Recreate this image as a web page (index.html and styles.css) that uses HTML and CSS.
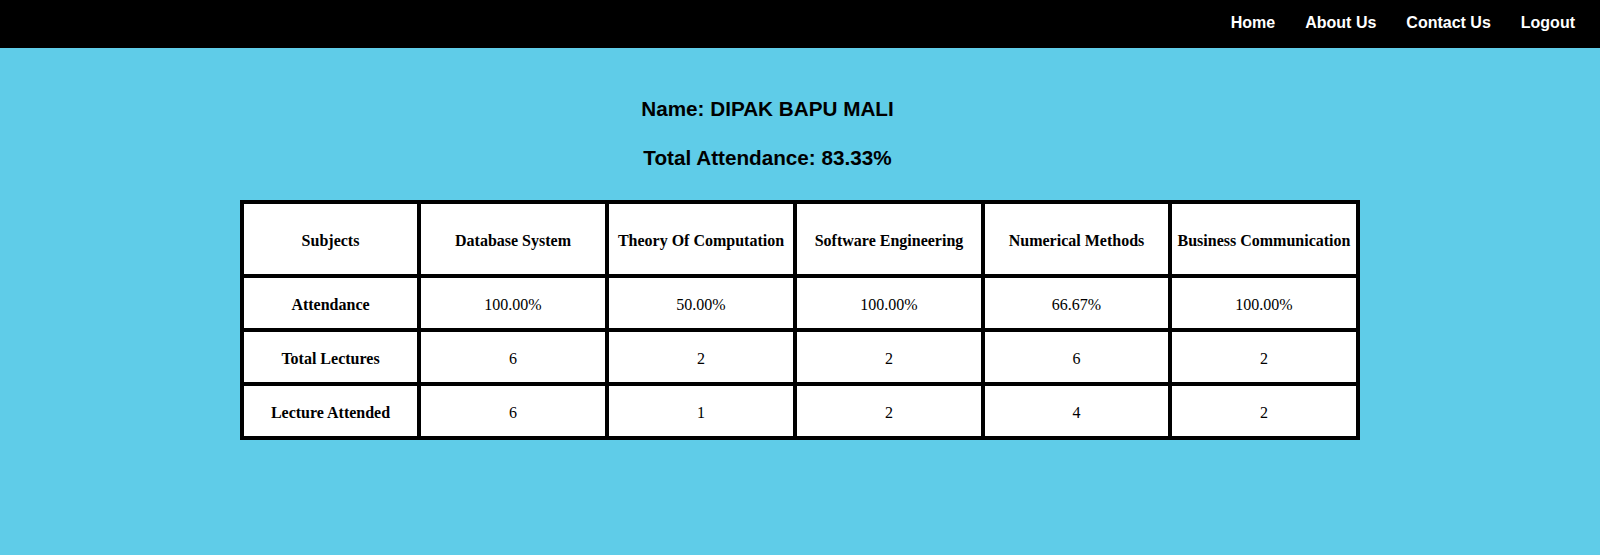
FILE: index.html
```html
<!DOCTYPE html>
<html lang="en">
<head>
<meta charset="utf-8">
<title>Attendance</title>
<link rel="stylesheet" href="styles.css">
</head>
<body>
<nav class="topnav">
  <a class="nav-link" href="#">Home</a>
  <a class="nav-link" href="#">About Us</a>
  <a class="nav-link" href="#">Contact Us</a>
  <a class="nav-link" href="#">Logout</a>
</nav>
<main class="content">
  <div class="info">
    <h2 class="info-line">Name: DIPAK BAPU MALI</h2>
    <h2 class="info-line">Total Attendance: 83.33%</h2>
  </div>
  <table class="att-table">
    <colgroup>
      <col class="c-first">
      <col class="c-wide">
      <col class="c-wide">
      <col class="c-wide">
      <col class="c-mid">
      <col class="c-wide">
    </colgroup>
    <tr class="row-head">
      <th>Subjects</th>
      <th>Database System</th>
      <th>Theory Of Computation</th>
      <th>Software Engineering</th>
      <th>Numerical Methods</th>
      <th>Business Communication</th>
    </tr>
    <tr class="row-body">
      <th>Attendance</th>
      <td>100.00%</td>
      <td>50.00%</td>
      <td>100.00%</td>
      <td>66.67%</td>
      <td>100.00%</td>
    </tr>
    <tr class="row-body">
      <th>Total Lectures</th>
      <td>6</td>
      <td>2</td>
      <td>2</td>
      <td>6</td>
      <td>2</td>
    </tr>
    <tr class="row-body">
      <th>Lecture Attended</th>
      <td>6</td>
      <td>1</td>
      <td>2</td>
      <td>4</td>
      <td>2</td>
    </tr>
  </table>
</main>
</body>
</html>
```

FILE: styles.css
```css
html, body {
  margin: 0;
  padding: 0;
}
body {
  background: #5fcce8;
  font-family: "Liberation Sans", Arial, sans-serif;
  min-height: 555px;
}
.topnav {
  background: #000;
  height: 48px;
  display: flex;
  justify-content: flex-end;
  align-items: center;
  padding: 0 10px 0 0;
  box-sizing: border-box;
}
.nav-link {
  color: #fff;
  font-weight: bold;
  font-size: 16px;
  text-decoration: none;
  padding: 0 15px;
  line-height: 20px;
  margin-top: -3px;
}
.content {
  padding-top: 49px;
}
.info {
  display: flex;
  flex-direction: column;
  align-items: center;
  gap: 25px;
  padding-right: 65px;
}
.info-line {
  margin: 0;
  font-size: 20.7px;
  line-height: 24px;
  font-weight: bold;
  color: #000;
}
.att-table {
  margin: 30px auto 0;
  width: 1120px;
  table-layout: fixed;
  border-collapse: separate;
  border-spacing: 0;
  border: 2px solid #000;
  background: #fff;
  font-family: "Liberation Serif", "Times New Roman", serif;
  font-size: 16px;
  color: #000;
}
.c-first { width: 177px; }
.c-wide { width: 188px; }
.c-mid { width: 187px; }
.att-table th,
.att-table td {
  border: 2px solid #000;
  padding: 4px 1px 0;
  text-align: center;
  vertical-align: middle;
}
.att-table th {
  font-weight: bold;
}
.row-head { height: 74px; }
.row-body { height: 54px; }
```
